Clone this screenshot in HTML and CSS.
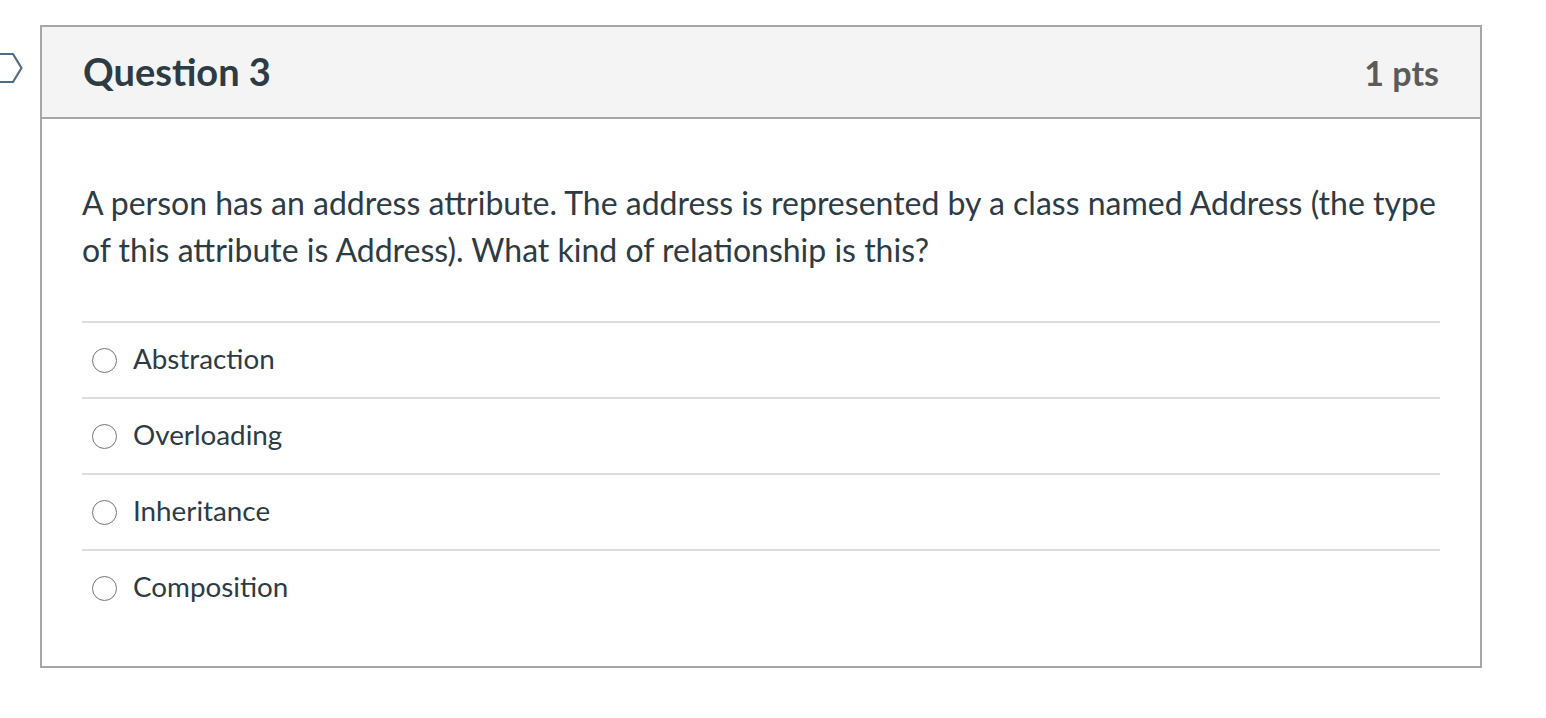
FILE: index.html
```html
<!DOCTYPE html>
<html lang="en">
<head>
<meta charset="utf-8">
<title>Question 3</title>
<link rel="stylesheet" href="styles.css">
</head>
<body>
<div class="page">
  <svg class="flag" width="30" height="34" viewBox="0 0 30 34" aria-hidden="true">
    <path d="M-4 2 H13 L21.5 16 L13 30 H-4" fill="none" stroke="#4f6b86" stroke-width="2.2" stroke-linejoin="round"/>
  </svg>
  <div class="card">
    <div class="card-header">
      <h2 class="title">Question 3</h2>
      <span class="pts">1 pts</span>
    </div>
    <div class="card-body">
      <p class="question">A person has an address attribute. The address is represented by a class named Address (the type of this attribute is Address). What kind of relationship is this?</p>
      <div class="answers">
        <label class="answer"><span class="radio"></span><span class="answer-text">Abstraction</span></label>
        <label class="answer"><span class="radio"></span><span class="answer-text">Overloading</span></label>
        <label class="answer"><span class="radio"></span><span class="answer-text">Inheritance</span></label>
        <label class="answer"><span class="radio"></span><span class="answer-text">Composition</span></label>
      </div>
    </div>
  </div>
</div>
</body>
</html>
```

FILE: styles.css
```css
html, body {
  margin: 0;
  padding: 0;
  background: #ffffff;
}

body {
  font-family: Lato, "Open Sans", "Liberation Sans", sans-serif;
  color: #2d3b45;
}

.page {
  position: relative;
  padding: 25px 0 0 40px;
}

.flag {
  position: absolute;
  left: 0;
  top: 52px;
}

.card {
  width: 1438px;
  border: 2px solid #a6a6a6;
  background: #fff;
}

.card-header {
  height: 90px;
  background: #f4f4f4;
  border-bottom: 2px solid #a6a6a6;
  display: flex;
  align-items: center;
  justify-content: space-between;
  padding: 0 41px 0 41px;
}

.title {
  margin: 0;
  font-size: 38px;
  font-weight: 700;
  color: #2d3b45;
  position: relative;
  top: -1px;
}

.pts {
  font-size: 34px;
  font-weight: 700;
  color: #5b5b5b;
}

.card-body {
  padding: 60px 40px 41px 40px;
}

.question {
  margin: 0;
  font-size: 32px;
  line-height: 47px;
  color: #2d3b45;
}

.answers {
  margin-top: 48px;
}

.answer {
  display: flex;
  align-items: center;
  height: 74px;
  border-top: 2px solid #dddddd;
}

.radio {
  box-sizing: border-box;
  width: 25px;
  height: 25px;
  border: 1.7px solid #777777;
  border-radius: 50%;
  margin-left: 10px;
  margin-right: 16px;
  flex: none;
}

.answer-text {
  font-size: 27.8px;
  color: #2d3b45;
  position: relative;
  top: -2px;
}
```
